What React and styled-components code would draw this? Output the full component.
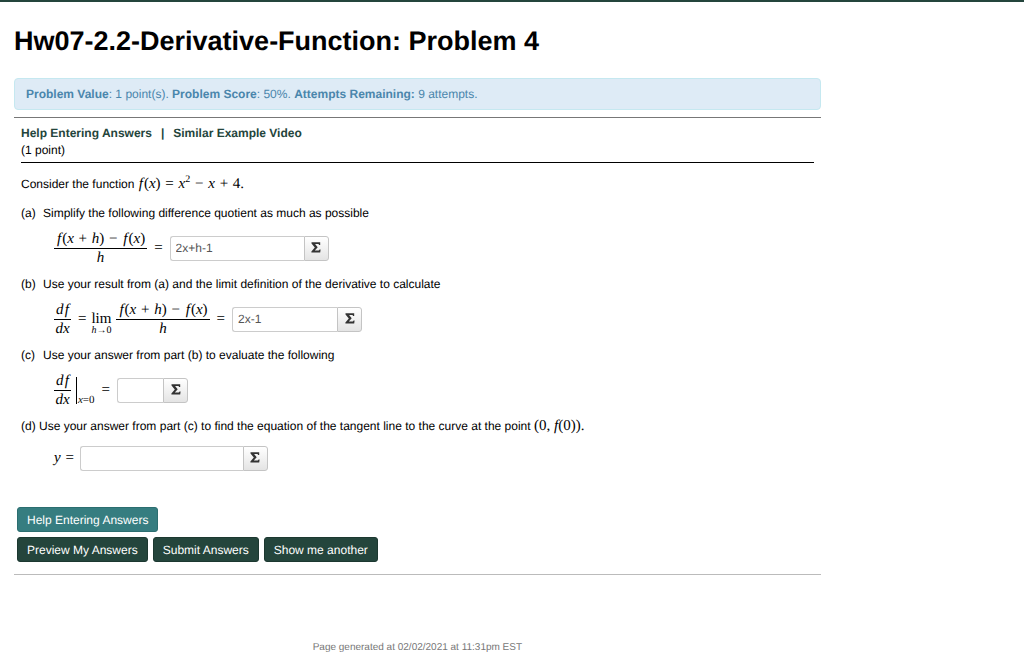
import React, { useState } from "react";
import styled, { createGlobalStyle } from "styled-components";

const App = () => {
  const [answers, setAnswers] = useState({ a: "2x+h-1", b: "2x-1", c: "", d: "" });

  const setAnswer = (part) => (e) => {
    setAnswers({ ...answers, [part]: e.target.value });
  };

  return (
    <>
      <GlobalStyle />
      <Page>
        <Title>Hw07-2.2-Derivative-Function: Problem 4</Title>
        <Main>
          <Alert>
            <b>Problem Value</b>: 1 point(s). <b>Problem Score</b>: 50%. <b>Attempts Remaining:</b> 9 attempts.
          </Alert>

          <form onSubmit={(e) => e.preventDefault()}>
            <Problem>
              <Links>
                <a href="#help">Help Entering Answers</a>
                <span>|</span>
                <a href="#video">Similar Example Video</a>
              </Links>
              <Points>(1 point)</Points>

              <Text>
                Consider the function{" "}
                <Math>
                  <Func>f</Func>(<i>x</i>) <Op>=</Op> <i>x</i><sup>2</sup> <Op>−</Op> <i>x</i> <Op>+</Op> 4.
                </Math>
              </Text>

              <Part>
                <Text><Letter>(a)</Letter>Simplify the following difference quotient as much as possible</Text>
                <MathRow>
                  <Quotient />
                  <Equals>=</Equals>
                  <Answer label="Answer a" width={134} value={answers.a} onChange={setAnswer("a")} />
                </MathRow>
              </Part>

              <Part>
                <Text><Letter>(b)</Letter>Use your result from (a) and the limit definition of the derivative to calculate</Text>
                <MathRow>
                  <Derivative />
                  <Equals $tight>=</Equals>
                  <Limit>
                    <span>lim</span>
                    <small><i>h</i>→0</small>
                  </Limit>
                  <Quotient />
                  <Equals>=</Equals>
                  <Answer label="Answer b" width={105} value={answers.b} onChange={setAnswer("b")} />
                </MathRow>
              </Part>

              <Part>
                <Text><Letter>(c)</Letter>Use your answer from part (b) to evaluate the following</Text>
                <MathRow>
                  <Derivative />
                  <EvaluatedAt><i>x</i>=0</EvaluatedAt>
                  <Equals>=</Equals>
                  <Answer label="Answer c" width={46} value={answers.c} onChange={setAnswer("c")} />
                </MathRow>
              </Part>

              <Part>
                <Text>
                  (d) Use your answer from part (c) to find the equation of the tangent line to the curve at the point{" "}
                  <Math>(0, <i>f</i>(0)).</Math>
                </Text>
                <MathRow $single>
                  <Math><i>y</i> <Op>=</Op></Math>
                  <Answer label="Answer d" width={163} value={answers.d} onChange={setAnswer("d")} />
                </MathRow>
              </Part>
            </Problem>

            <Actions>
              <ButtonRow>
                <Button type="button" $info>Help Entering Answers</Button>
              </ButtonRow>
              <ButtonRow>
                <Button type="button">Preview My Answers</Button>
                <Button type="submit">Submit Answers</Button>
                <Button type="button">Show me another</Button>
              </ButtonRow>
            </Actions>
          </form>
          <Footer>Page generated at 02/02/2021 at 11:31pm EST</Footer>
        </Main>
      </Page>
    </>
  );
};

const Quotient = () => (
  <Fraction>
    <Numerator>
      <Func>f</Func>(<i>x</i> <Op>+</Op> <i>h</i>) <Op>−</Op> <Func>f</Func>(<i>x</i>)
    </Numerator>
    <span><i>h</i></span>
  </Fraction>
);

const Derivative = () => (
  <Fraction>
    <Numerator><i>d</i>&#8202;<i>f</i></Numerator>
    <span><i>dx</i></span>
  </Fraction>
);

const Answer = ({ label, width, value, onChange }) => (
  <AnswerGroup>
    <AnswerInput aria-label={label} type="text" $width={width} value={value} onChange={onChange} />
    <SigmaButton type="button" aria-label="Equation editor">
      <svg width="10" height="11" viewBox="0 0 10 11">
        <path
          d="M0.5 0.3H9.2V3H8.1C8 2.4 7.7 2.1 7 2.1H4.1L6.7 5.2L3.8 8.6H7.2C8 8.6 8.3 8.3 8.5 7.6H9.6L9.2 10.5H0.4V9.4L3.8 5.6L0.5 1.5Z"
          fill="#333"
        />
      </svg>
    </SigmaButton>
  </AnswerGroup>
);

const GlobalStyle = createGlobalStyle`
  * {
    box-sizing: border-box;
  }

  body {
    margin: 0;
    background: #fff;
    color: #000;
    font-family: "Liberation Sans", Arial, Helvetica, sans-serif;
    font-size: 12px;
    line-height: 17px;
    text-rendering: geometricPrecision;
  }
`;

const Page = styled.div`
  border-top: 2px solid #24453c;
  padding: 0 14px;
`;

const Title = styled.h1`
  margin: 0;
  padding: 21px 0 19px;
  font-size: 27px;
  line-height: 36px;
`;

const Main = styled.main`
  width: 81%;
`;

const Alert = styled.div`
  padding: 7px 11px;
  border: 1px solid #c5e8f0;
  border-radius: 4px;
  background: #deebf6;
  color: #4a86ac;
  line-height: 16px;
`;

const Problem = styled.div`
  margin-top: 7px;
  padding: 7px 7px 0;
  border-top: 1px solid #777;
`;

const Links = styled.div`
  display: flex;
  gap: 9px;
  color: #24453c;
  font-weight: bold;

  a {
    color: inherit;
    text-decoration: none;
  }
`;

const Points = styled.div`
  padding-bottom: 3px;
  margin-bottom: 13px;
  border-bottom: 1px solid #000;
`;

const Text = styled.p`
  margin: 0;
  height: 17px;
  white-space: nowrap;
`;

const Letter = styled.span`
  display: inline-block;
  width: 22px;
`;

const Math = styled.span`
  font-family: "Liberation Serif", "Times New Roman", serif;
  font-size: 15px;

  sup {
    font-size: 10px;
    line-height: 0;
  }
`;

const Func = styled.i`
  padding: 0 1px;
`;

const Op = styled.span`
  padding: 0 1px;
`;

const Part = styled.section`
  margin-top: 6px;

  &:first-of-type {
    margin-top: 12px;
  }
`;

const MathRow = styled.div`
  display: flex;
  align-items: center;
  gap: 5px;
  min-height: ${({ $single }) => ($single ? "25px" : "44px")};
  margin-top: ${({ $single }) => ($single ? "11px" : "4px")};
  padding-left: 33px;
`;

const Fraction = styled(Math)`
  display: inline-flex;
  flex-direction: column;
  align-items: center;
  line-height: 18px;
  white-space: nowrap;
`;

const Numerator = styled.span`
  padding: 0 2px;
  border-bottom: 1px solid #000;
`;

const Equals = styled(Math)`
  padding: ${({ $tight }) => ($tight ? "0 0 0 2px" : "0 2px")};
`;

const Limit = styled(Math)`
  display: inline-flex;
  flex-direction: column;
  align-items: center;
  padding-top: 8px;

  span {
    line-height: 16px;
  }

  small {
    font-size: 10px;
    line-height: 8px;
  }
`;

const EvaluatedAt = styled(Math)`
  display: flex;
  align-items: flex-end;
  height: 27px;
  padding-left: 1px;
  border-left: 1px solid #000;
  font-size: 11px;
  line-height: 7px;
`;

const AnswerGroup = styled.div`
  display: flex;
  height: 25px;
`;

const AnswerInput = styled.input`
  width: ${({ $width }) => $width}px;
  padding: 0 5px;
  border: 1px solid #ccc;
  border-right: 0;
  border-radius: 3px 0 0 3px;
  background: #fff;
  color: #555;
  font-family: inherit;
  font-size: 12px;
  text-rendering: inherit;
`;

const SigmaButton = styled.button`
  display: flex;
  align-items: center;
  justify-content: center;
  width: 25px;
  padding: 0 0 2px;
  border: 1px solid #c4c4c4;
  border-radius: 0 3px 3px 0;
  background: linear-gradient(#fff, #e4e4e4);
  cursor: pointer;
`;

const Actions = styled.div`
  display: flex;
  flex-direction: column;
  gap: 5px;
  margin-top: 36px;
  padding: 0 3px 12px;
  border-bottom: 1px solid #bbb;
`;

const ButtonRow = styled.div`
  display: flex;
  gap: 5px;
`;

const Button = styled.button`
  height: 25px;
  padding: 0 9px;
  border: 1px solid ${({ $info }) => ($info ? "#2c6e70" : "#1c3830")};
  border-radius: 3px;
  background: ${({ $info }) => ($info ? "#367d80" : "#24453c")};
  color: #fff;
  font-family: inherit;
  font-size: 12px;
  text-rendering: inherit;
  cursor: pointer;
`;

const Footer = styled.footer`
  margin-top: 64px;
  color: #777;
  font-size: 10px;
  text-align: center;
`;

export default App;
